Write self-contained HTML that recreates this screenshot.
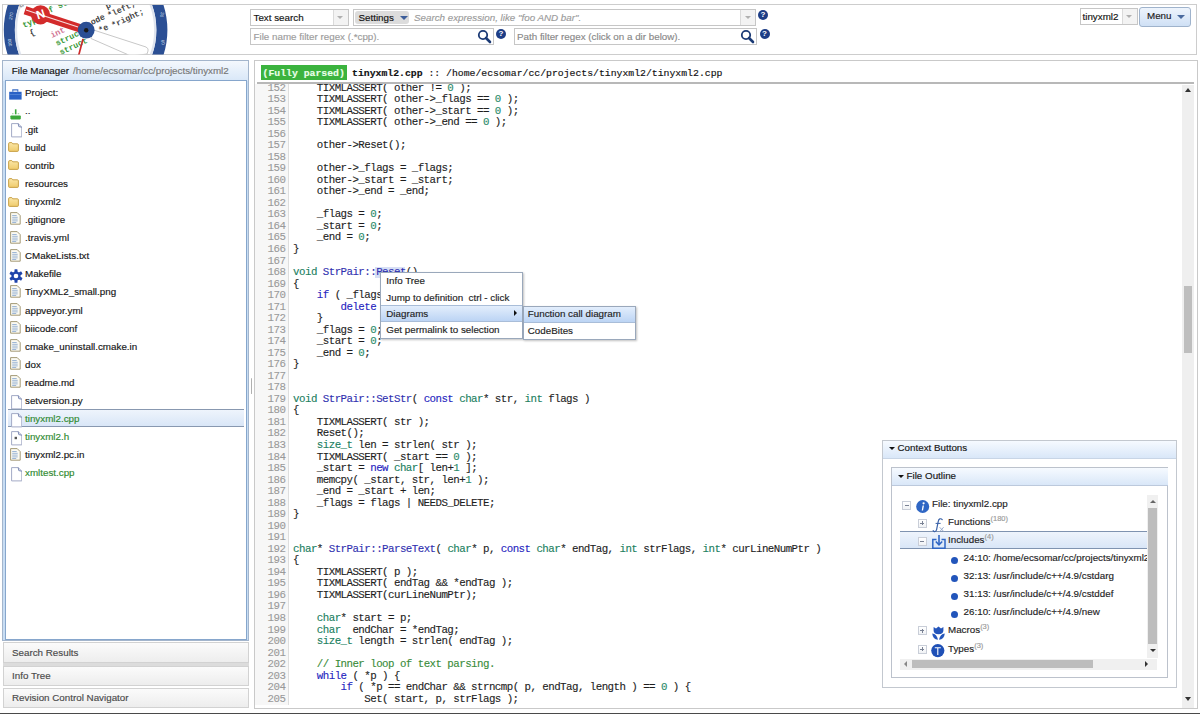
<!DOCTYPE html><html><head><meta charset="utf-8"><style>
*{box-sizing:border-box}
html,body{margin:0;padding:0}
body{width:1200px;height:714px;overflow:hidden;position:relative;background:#fff;font-family:"Liberation Sans",sans-serif;font-size:9.8px;color:#222}
div,span{position:absolute}
.t{white-space:nowrap;-webkit-text-stroke:0.15px}
#hdr{left:2px;top:4px;width:1195px;height:51px;border:1px solid #cdcdcd;background:#fff;overflow:hidden}
.inp{border:1px solid #c6c6c6;background:#fff}
.arr{top:0;bottom:0;right:0;width:15px;border-left:1px solid #dadada;background:#f3f3f3}
.arr:after{content:"";position:absolute;left:3.5px;top:6px;border-left:3.5px solid transparent;border-right:3.5px solid transparent;border-top:3.5px solid #b0b0b0}
.ph{color:#9b9b9b}
.help{width:10px;height:10px;border-radius:50%;background:#1d3d86;color:#fff;font-weight:bold;font-size:8px;line-height:10px;text-align:center}
.code{font-family:"Liberation Mono",monospace;font-size:10.8px;letter-spacing:-0.546px;white-space:pre;line-height:11.526px;-webkit-text-stroke:0.12px}
.hd{font-family:"Liberation Mono",monospace;font-size:9.8px;white-space:pre}
i{font-style:normal}
.kw{color:#2525c0}.ty{color:#208060}.nu{color:#2a8a6a}.df{color:#3030b0}.cm{color:#3a8c3a}
</style></head><body>
<div id="hdr"></div>
<svg style="position:absolute;left:0;top:0" width="175" height="56" viewBox="0 0 175 56">
<defs><clipPath id="lc"><rect x="3" y="5" width="168" height="49.5"/></clipPath></defs>
<g clip-path="url(#lc)">
<circle cx="85.6" cy="30" r="76.3" fill="none" stroke="#2b4f94" stroke-width="11"/>
<circle cx="85.6" cy="30" r="69.6" fill="none" stroke="#dfe4ee" stroke-width="2.2"/>
<g font-family="Liberation Mono" font-size="8.3" font-weight="bold">
<text transform="translate(109,18) rotate(-25)" fill="#444">*left;</text>
<text transform="translate(107,9) rotate(-25)" fill="#444">p</text>
<text transform="translate(92,25) rotate(-25)" fill="#444">ode</text>
<text transform="translate(113,28) rotate(-25)" fill="#444">*right;</text>
<text transform="translate(100,33) rotate(-25)" fill="#444">*e</text>
<text transform="translate(24,28) rotate(-25)" fill="#3a9a3a">typ</text>
<text transform="translate(50,13) rotate(-25)" fill="#3a9a3a">f st</text>
<text transform="translate(31,36) rotate(-25)" fill="#444">{</text>
<text transform="translate(52,38) rotate(-25)" fill="#d07090">int</text>
<text transform="translate(57,46) rotate(-25)" fill="#3a9a3a">struc</text>
<text transform="translate(61,55) rotate(-25)" fill="#3a9a3a">struct</text>
<text transform="translate(20,8) rotate(-25)" fill="#999">u</text>
</g>
<path d="M92 29.5 L146 47 Q149 48.5 148 51 L147 54 L131 56 L91 38.5 Z" fill="#fff" stroke="#c8c8c8" stroke-width="1"/>
<line x1="25" y1="10.3" x2="86" y2="30.2" stroke="#d32b2b" stroke-width="8.5"/>
<circle cx="40.5" cy="14.8" r="9.6" fill="#d32b2b"/>
<line x1="26" y1="10" x2="78" y2="27" stroke="#f8dede" stroke-width="1.1"/>
<text x="40.6" y="18.3" font-family="Liberation Sans" font-weight="bold" font-size="12" fill="#fff" text-anchor="middle" transform="rotate(-18 40.6 14)">N</text>
<line x1="83" y1="39" x2="78.5" y2="56" stroke="#cc2a2a" stroke-width="1.7"/>
<circle cx="86.2" cy="30.2" r="8.4" fill="#2b4f94"/>
<circle cx="86.2" cy="30.2" r="2.2" fill="#1a1a1a"/>
<g font-family="Liberation Sans" font-size="4.5" fill="#dfe6f2">
<text transform="translate(12,20) rotate(-80)">270</text>
<text transform="translate(12,46) rotate(-100)">300</text>
<text transform="translate(161,12) rotate(100)">30</text>
<text transform="translate(161,40) rotate(80)">60</text>
</g>
</g></svg>
<div class="inp" style="left:250px;top:9px;width:98.5px;height:16.5px"><span class="t" style="left:2.5px;top:1.5px;color:#111">Text search</span><div class="arr"></div></div>
<div class="inp" style="left:353px;top:9px;width:403px;height:16.5px"><div style="left:1px;top:1.2px;width:54px;height:12.8px;border-radius:3px;background:#dcdcdc"></div><span class="t" style="left:4.5px;top:1.5px;color:#111">Settings</span><span style="left:45.5px;top:6.2px;border-left:4px solid transparent;border-right:4px solid transparent;border-top:4.5px solid #3d5e9a"></span><span class="t ph" style="left:60px;top:1.5px;font-style:italic">Search expression, like "foo AND bar".</span><div class="arr"></div></div>
<div class="help" style="left:758px;top:10px">?</div>
<div class="inp" style="left:250px;top:28px;width:244px;height:16.5px"><span class="t ph" style="left:2.5px;top:1.5px">File name filter regex (.*cpp).</span></div>
<div class="help" style="left:496px;top:29px">?</div>
<div class="inp" style="left:513.5px;top:28px;width:243px;height:16.5px"><span class="t ph" style="left:2.5px;top:1.5px;color:#888">Path filter regex (click on a dir below).</span></div>
<div class="help" style="left:759.5px;top:29px">?</div>
<svg style="position:absolute;left:477px;top:29px" width="15" height="15" viewBox="0 0 15 15"><circle cx="6" cy="6" r="4.2" fill="none" stroke="#1b3a75" stroke-width="1.8"/><line x1="9" y1="9" x2="13" y2="13" stroke="#1b3a75" stroke-width="2.6" stroke-linecap="round"/></svg>
<svg style="position:absolute;left:740px;top:29px" width="15" height="15" viewBox="0 0 15 15"><circle cx="6" cy="6" r="4.2" fill="none" stroke="#1b3a75" stroke-width="1.8"/><line x1="9" y1="9" x2="13" y2="13" stroke="#1b3a75" stroke-width="2.6" stroke-linecap="round"/></svg>
<div class="inp" style="left:1080px;top:8px;width:57.5px;height:17px"><span class="t" style="left:1.5px;top:2px;color:#111">tinyxml2</span><div class="arr"></div></div>
<div style="left:1139px;top:7px;width:51.5px;height:19.5px;border:1px solid #9fb3cc;border-radius:3px;background:linear-gradient(#eef4fc,#cfe0f5)"><span class="t" style="left:7px;top:2.2px;color:#1a1a1a">Menu</span><span style="left:37px;top:7px;border-left:4px solid transparent;border-right:4px solid transparent;border-top:4.5px solid #4a6a9e"></span></div>
<div style="left:2px;top:59.5px;width:247px;height:581px;border:1px solid #a3b5cc;background:linear-gradient(#f4f8fd,#d8e7f8 20px,#c8ddf3 20px,#c8ddf3)"></div>
<span class="t" style="left:11.8px;top:64.6px;color:#111">File Manager</span><span class="t" style="left:73px;top:64.6px;color:#777">/home/ecsomar/cc/projects/tinyxml2</span>
<div style="left:5px;top:80px;width:242px;height:560px;border:1px solid #86a6cc;background:#fff"></div>
<span class="t" style="left:25px;top:87.30px;color:#151515">Project:</span>
<svg style="position:absolute;left:9px;top:89.1px" width="13" height="11" viewBox="0 0 13 11"><rect x="0.2" y="2.8" width="12.4" height="7.8" fill="#2a62c6"/><path d="M3.8 2.8 L3.8 0.9 L8.8 0.9 L8.8 2.8" fill="none" stroke="#3d6ec4" stroke-width="1.1"/><rect x="0.2" y="5" width="12.4" height="0.7" fill="#5e8fdc"/></svg>
<span class="t" style="left:25px;top:105.40px;color:#151515">..</span>
<svg style="position:absolute;left:9.5px;top:108.8px" width="11" height="11" viewBox="0 0 11 11"><rect x="0.4" y="6.4" width="10.4" height="4" rx="0.8" fill="#3aa83a"/><rect x="4.9" y="0.3" width="1.6" height="5" fill="#3aa83a"/><rect x="2" y="4.3" width="1.5" height="0.9" fill="#8acb8a"/><rect x="7.7" y="4.3" width="1.5" height="0.9" fill="#8acb8a"/></svg>
<span class="t" style="left:25px;top:123.50px;color:#151515">.git</span>
<svg style="position:absolute;left:10.5px;top:123.4px" width="11.5" height="14.5" viewBox="0 0 11.5 14.5"><path d="M0.6 0.6 L7.2 0.6 L10.8 4.2 L10.8 13.9 L0.6 13.9 Z" fill="#fff" stroke="#a3aac6" stroke-width="1"/><path d="M7.2 0.6 L7.8 3.6 L10.8 4.2" fill="none" stroke="#6f7fae" stroke-width="0.9"/></svg>
<span class="t" style="left:25px;top:141.60px;color:#151515">build</span>
<svg style="position:absolute;left:8px;top:142.2px" width="11" height="10" viewBox="0 0 11 10"><defs><linearGradient id="fg3" x1="0" y1="0" x2="0" y2="1"><stop offset="0" stop-color="#fbe7a8"/><stop offset="1" stop-color="#efcb6c"/></linearGradient></defs><path d="M0.6 1.8 Q0.6 0.6 1.8 0.6 L3.8 0.6 L4.8 1.8 L9.4 1.8 Q10.4 1.8 10.4 2.8 L10.4 8.6 Q10.4 9.4 9.4 9.4 L1.6 9.4 Q0.6 9.4 0.6 8.6 Z" fill="url(#fg3)" stroke="#c39a3c" stroke-width="0.9"/></svg>
<span class="t" style="left:25px;top:159.70px;color:#151515">contrib</span>
<svg style="position:absolute;left:8px;top:160.3px" width="11" height="10" viewBox="0 0 11 10"><defs><linearGradient id="fg4" x1="0" y1="0" x2="0" y2="1"><stop offset="0" stop-color="#fbe7a8"/><stop offset="1" stop-color="#efcb6c"/></linearGradient></defs><path d="M0.6 1.8 Q0.6 0.6 1.8 0.6 L3.8 0.6 L4.8 1.8 L9.4 1.8 Q10.4 1.8 10.4 2.8 L10.4 8.6 Q10.4 9.4 9.4 9.4 L1.6 9.4 Q0.6 9.4 0.6 8.6 Z" fill="url(#fg4)" stroke="#c39a3c" stroke-width="0.9"/></svg>
<span class="t" style="left:25px;top:177.80px;color:#151515">resources</span>
<svg style="position:absolute;left:8px;top:178.4px" width="11" height="10" viewBox="0 0 11 10"><defs><linearGradient id="fg5" x1="0" y1="0" x2="0" y2="1"><stop offset="0" stop-color="#fbe7a8"/><stop offset="1" stop-color="#efcb6c"/></linearGradient></defs><path d="M0.6 1.8 Q0.6 0.6 1.8 0.6 L3.8 0.6 L4.8 1.8 L9.4 1.8 Q10.4 1.8 10.4 2.8 L10.4 8.6 Q10.4 9.4 9.4 9.4 L1.6 9.4 Q0.6 9.4 0.6 8.6 Z" fill="url(#fg5)" stroke="#c39a3c" stroke-width="0.9"/></svg>
<span class="t" style="left:25px;top:195.90px;color:#151515">tinyxml2</span>
<svg style="position:absolute;left:8px;top:196.5px" width="11" height="10" viewBox="0 0 11 10"><defs><linearGradient id="fg6" x1="0" y1="0" x2="0" y2="1"><stop offset="0" stop-color="#fbe7a8"/><stop offset="1" stop-color="#efcb6c"/></linearGradient></defs><path d="M0.6 1.8 Q0.6 0.6 1.8 0.6 L3.8 0.6 L4.8 1.8 L9.4 1.8 Q10.4 1.8 10.4 2.8 L10.4 8.6 Q10.4 9.4 9.4 9.4 L1.6 9.4 Q0.6 9.4 0.6 8.6 Z" fill="url(#fg6)" stroke="#c39a3c" stroke-width="0.9"/></svg>
<span class="t" style="left:25px;top:214.00px;color:#151515">.gitignore</span>
<svg style="position:absolute;left:9.7px;top:212.4px" width="11" height="13" viewBox="0 0 11 13"><path d="M0.6 0.6 L7.2 0.6 L10.2 3.6 L10.2 12.2 L0.6 12.2 Z" fill="#fbfaf2" stroke="#9b8f68" stroke-width="0.9"/><path d="M2.2 3.5h4.5M2.2 5.3h5.5M2.2 7.1h5.5M2.2 8.9h5.5M2.2 10.5h4" stroke="#93afd3" stroke-width="0.9"/></svg>
<span class="t" style="left:25px;top:232.10px;color:#151515">.travis.yml</span>
<svg style="position:absolute;left:9.7px;top:230.5px" width="11" height="13" viewBox="0 0 11 13"><path d="M0.6 0.6 L7.2 0.6 L10.2 3.6 L10.2 12.2 L0.6 12.2 Z" fill="#fbfaf2" stroke="#9b8f68" stroke-width="0.9"/><path d="M2.2 3.5h4.5M2.2 5.3h5.5M2.2 7.1h5.5M2.2 8.9h5.5M2.2 10.5h4" stroke="#93afd3" stroke-width="0.9"/></svg>
<span class="t" style="left:25px;top:250.20px;color:#151515">CMakeLists.txt</span>
<svg style="position:absolute;left:9.7px;top:248.6px" width="11" height="13" viewBox="0 0 11 13"><path d="M0.6 0.6 L7.2 0.6 L10.2 3.6 L10.2 12.2 L0.6 12.2 Z" fill="#fbfaf2" stroke="#9b8f68" stroke-width="0.9"/><path d="M2.2 3.5h4.5M2.2 5.3h5.5M2.2 7.1h5.5M2.2 8.9h5.5M2.2 10.5h4" stroke="#93afd3" stroke-width="0.9"/></svg>
<span class="t" style="left:25px;top:268.30px;color:#151515">Makefile</span>
<svg style="position:absolute;left:8.5px;top:268.9px" width="14" height="14" viewBox="0 0 14 14"><g fill="#1f44aa"><circle cx="7" cy="7" r="4.6"/><rect x="5.5" y="0.2" width="3" height="13.6" rx="0.6"/><rect x="5.5" y="0.2" width="3" height="13.6" rx="0.6" transform="rotate(60 7 7)"/><rect x="5.5" y="0.2" width="3" height="13.6" rx="0.6" transform="rotate(-60 7 7)"/></g><circle cx="7" cy="7" r="2.3" fill="#fff"/></svg>
<span class="t" style="left:25px;top:286.40px;color:#151515">TinyXML2_small.png</span>
<svg style="position:absolute;left:9.7px;top:284.8px" width="11" height="13" viewBox="0 0 11 13"><path d="M0.6 0.6 L7.2 0.6 L10.2 3.6 L10.2 12.2 L0.6 12.2 Z" fill="#fbfaf2" stroke="#9b8f68" stroke-width="0.9"/><path d="M2.2 3.5h4.5M2.2 5.3h5.5M2.2 7.1h5.5M2.2 8.9h5.5M2.2 10.5h4" stroke="#93afd3" stroke-width="0.9"/></svg>
<span class="t" style="left:25px;top:304.50px;color:#151515">appveyor.yml</span>
<svg style="position:absolute;left:9.7px;top:302.9px" width="11" height="13" viewBox="0 0 11 13"><path d="M0.6 0.6 L7.2 0.6 L10.2 3.6 L10.2 12.2 L0.6 12.2 Z" fill="#fbfaf2" stroke="#9b8f68" stroke-width="0.9"/><path d="M2.2 3.5h4.5M2.2 5.3h5.5M2.2 7.1h5.5M2.2 8.9h5.5M2.2 10.5h4" stroke="#93afd3" stroke-width="0.9"/></svg>
<span class="t" style="left:25px;top:322.60px;color:#151515">biicode.conf</span>
<svg style="position:absolute;left:9.7px;top:321.0px" width="11" height="13" viewBox="0 0 11 13"><path d="M0.6 0.6 L7.2 0.6 L10.2 3.6 L10.2 12.2 L0.6 12.2 Z" fill="#fbfaf2" stroke="#9b8f68" stroke-width="0.9"/><path d="M2.2 3.5h4.5M2.2 5.3h5.5M2.2 7.1h5.5M2.2 8.9h5.5M2.2 10.5h4" stroke="#93afd3" stroke-width="0.9"/></svg>
<span class="t" style="left:25px;top:340.70px;color:#151515">cmake_uninstall.cmake.in</span>
<svg style="position:absolute;left:9.7px;top:339.1px" width="11" height="13" viewBox="0 0 11 13"><path d="M0.6 0.6 L7.2 0.6 L10.2 3.6 L10.2 12.2 L0.6 12.2 Z" fill="#fbfaf2" stroke="#9b8f68" stroke-width="0.9"/><path d="M2.2 3.5h4.5M2.2 5.3h5.5M2.2 7.1h5.5M2.2 8.9h5.5M2.2 10.5h4" stroke="#93afd3" stroke-width="0.9"/></svg>
<span class="t" style="left:25px;top:358.80px;color:#151515">dox</span>
<svg style="position:absolute;left:9.7px;top:357.2px" width="11" height="13" viewBox="0 0 11 13"><path d="M0.6 0.6 L7.2 0.6 L10.2 3.6 L10.2 12.2 L0.6 12.2 Z" fill="#fbfaf2" stroke="#9b8f68" stroke-width="0.9"/><path d="M2.2 3.5h4.5M2.2 5.3h5.5M2.2 7.1h5.5M2.2 8.9h5.5M2.2 10.5h4" stroke="#93afd3" stroke-width="0.9"/></svg>
<span class="t" style="left:25px;top:376.90px;color:#151515">readme.md</span>
<svg style="position:absolute;left:9.7px;top:375.3px" width="11" height="13" viewBox="0 0 11 13"><path d="M0.6 0.6 L7.2 0.6 L10.2 3.6 L10.2 12.2 L0.6 12.2 Z" fill="#fbfaf2" stroke="#9b8f68" stroke-width="0.9"/><path d="M2.2 3.5h4.5M2.2 5.3h5.5M2.2 7.1h5.5M2.2 8.9h5.5M2.2 10.5h4" stroke="#93afd3" stroke-width="0.9"/></svg>
<span class="t" style="left:25px;top:395.00px;color:#151515">setversion.py</span>
<svg style="position:absolute;left:10.5px;top:394.9px" width="11.5" height="14.5" viewBox="0 0 11.5 14.5"><path d="M0.6 0.6 L7.2 0.6 L10.8 4.2 L10.8 13.9 L0.6 13.9 Z" fill="#fff" stroke="#a3aac6" stroke-width="1"/><path d="M7.2 0.6 L7.8 3.6 L10.8 4.2" fill="none" stroke="#6f7fae" stroke-width="0.9"/></svg>
<div style="left:8px;top:409.3px;width:236px;height:18px;border-top:1px solid #8898b0;border-bottom:1px solid #8898b0;background:linear-gradient(#eef4fc,#d9e6f7)"></div>
<span class="t" style="left:25px;top:413.10px;color:#2f8a2f">tinyxml2.cpp</span>
<svg style="position:absolute;left:10.5px;top:413.0px" width="11.5" height="14.5" viewBox="0 0 11.5 14.5"><path d="M0.6 0.6 L7.2 0.6 L10.8 4.2 L10.8 13.9 L0.6 13.9 Z" fill="#fff" stroke="#a3aac6" stroke-width="1"/><path d="M7.2 0.6 L7.8 3.6 L10.8 4.2" fill="none" stroke="#6f7fae" stroke-width="0.9"/></svg>
<span class="t" style="left:25px;top:431.20px;color:#2f8a2f">tinyxml2.h</span>
<svg style="position:absolute;left:10.5px;top:431.1px" width="11.5" height="14.5" viewBox="0 0 11.5 14.5"><path d="M0.6 0.6 L7.2 0.6 L10.8 4.2 L10.8 13.9 L0.6 13.9 Z" fill="#fff" stroke="#a3aac6" stroke-width="1"/><path d="M7.2 0.6 L7.8 3.6 L10.8 4.2" fill="none" stroke="#6f7fae" stroke-width="0.9"/><rect x="3.6" y="5.8" width="2.4" height="2.4" fill="#555"/></svg>
<span class="t" style="left:25px;top:449.30px;color:#151515">tinyxml2.pc.in</span>
<svg style="position:absolute;left:9.7px;top:447.7px" width="11" height="13" viewBox="0 0 11 13"><path d="M0.6 0.6 L7.2 0.6 L10.2 3.6 L10.2 12.2 L0.6 12.2 Z" fill="#fbfaf2" stroke="#9b8f68" stroke-width="0.9"/><path d="M2.2 3.5h4.5M2.2 5.3h5.5M2.2 7.1h5.5M2.2 8.9h5.5M2.2 10.5h4" stroke="#93afd3" stroke-width="0.9"/></svg>
<span class="t" style="left:25px;top:467.40px;color:#2f8a2f">xmltest.cpp</span>
<svg style="position:absolute;left:10.5px;top:467.3px" width="11.5" height="14.5" viewBox="0 0 11.5 14.5"><path d="M0.6 0.6 L7.2 0.6 L10.8 4.2 L10.8 13.9 L0.6 13.9 Z" fill="#fff" stroke="#a3aac6" stroke-width="1"/><path d="M7.2 0.6 L7.8 3.6 L10.8 4.2" fill="none" stroke="#6f7fae" stroke-width="0.9"/></svg>
<div style="left:3px;top:641.5px;width:245.5px;height:21px;border:1px solid #d2d2d2;background:linear-gradient(#fbfbfb,#ededed)"><span class="t" style="left:8px;top:4.6px;color:#4a4a4a">Search Results</span></div>
<div style="left:3px;top:665.5px;width:245.5px;height:20px;border:1px solid #d2d2d2;background:linear-gradient(#fbfbfb,#ededed)"><span class="t" style="left:8px;top:3.3px;color:#4a4a4a">Info Tree</span></div>
<div style="left:3px;top:687.5px;width:245.5px;height:20px;border:1px solid #d2d2d2;background:linear-gradient(#fbfbfb,#ededed)"><span class="t" style="left:8px;top:3.3px;color:#4a4a4a">Revision Control Navigator</span></div>
<div style="left:3px;top:662.5px;width:245.5px;height:3px;background:#dcdcdc"></div>
<div style="left:250.8px;top:377.5px;width:1.2px;height:16px;background:#b0b0b0;border-radius:1px"></div>
<div style="left:253.5px;top:59.5px;width:944px;height:649.5px;border:1px solid #c9c9c9;background:#fff"></div>
<div style="left:261px;top:65px;width:85.7px;height:14.7px;background:#3bb33e"></div>
<span class="t hd" style="left:262.5px;top:67.8px;color:#eaffea;font-weight:bold">(Fully parsed)</span>
<span class="t hd" style="left:352px;top:68.1px;color:#111"><b>tinyxml2.cpp</b> :: /home/ecsomar/cc/projects/tinyxml2/tinyxml2.cpp</span>
<div style="left:257px;top:81.8px;width:937px;height:2px;background:#b8b8b8"></div>
<div style="left:254.5px;top:83.8px;width:927px;height:624px;overflow:hidden">
<div style="left:0;top:0;width:34px;height:621px;background:#f7f7f7;border-right:1px solid #dedede"></div>
<div class="code" style="left:0;top:-1.26px;width:30.9px;text-align:right;color:#999;-webkit-text-stroke:0.1px">152
153
154
155
156
157
158
159
160
161
162
163
164
165
166
167
168
169
170
171
172
173
174
175
176
177
178
179
180
181
182
183
184
185
186
187
188
189
190
191
192
193
194
195
196
197
198
199
200
201
202
203
204
205</div>
<div style="left:120.8px;top:183.46px;width:29.4px;height:10.5px;background:#d7dff5"></div>
<div class="code" style="left:38.60px;top:-1.26px;color:#1e1e1e">    TIXMLASSERT( other != <i class="nu">0</i> );
    TIXMLASSERT( other-&gt;_flags == <i class="nu">0</i> );
    TIXMLASSERT( other-&gt;_start == <i class="nu">0</i> );
    TIXMLASSERT( other-&gt;_end == <i class="nu">0</i> );

    other-&gt;Reset();

    other-&gt;_flags = _flags;
    other-&gt;_start = _start;
    other-&gt;_end = _end;

    _flags = <i class="nu">0</i>;
    _start = <i class="nu">0</i>;
    _end = <i class="nu">0</i>;
}

<i class="ty">void</i> <i class="df">StrPair::Reset</i>()
{
    <i class="kw">if</i> ( _flags &amp; NEEDS_DELETE ) {
        <i class="kw">delete</i> [] _start;
    }
    _flags = <i class="nu">0</i>;
    _start = <i class="nu">0</i>;
    _end = <i class="nu">0</i>;
}


<i class="ty">void</i> <i class="df">StrPair::SetStr</i>( <i class="kw">const</i> <i class="ty">char</i>* str, <i class="ty">int</i> flags )
{
    TIXMLASSERT( str );
    Reset();
    <i class="ty">size_t</i> len = strlen( str );
    TIXMLASSERT( _start == <i class="nu">0</i> );
    _start = <i class="kw">new</i> <i class="ty">char</i>[ len+<i class="nu">1</i> ];
    memcpy( _start, str, len+<i class="nu">1</i> );
    _end = _start + len;
    _flags = flags | NEEDS_DELETE;
}


<i class="ty">char</i>* <i class="df">StrPair::ParseText</i>( <i class="ty">char</i>* p, <i class="kw">const</i> <i class="ty">char</i>* endTag, <i class="ty">int</i> strFlags, <i class="ty">int</i>* curLineNumPtr )
{
    TIXMLASSERT( p );
    TIXMLASSERT( endTag &amp;&amp; *endTag );
    TIXMLASSERT(curLineNumPtr);

    <i class="ty">char</i>* start = p;
    <i class="ty">char</i>  endChar = *endTag;
    <i class="ty">size_t</i> length = strlen( endTag );

    <i class="cm" style="font-style:normal">// Inner loop of text parsing.</i>
    <i class="kw">while</i> ( *p ) {
        <i class="kw">if</i> ( *p == endChar &amp;&amp; strncmp( p, endTag, length ) == <i class="nu">0</i> ) {
            Set( start, p, strFlags );</div>
</div>
<div style="left:1182px;top:84.5px;width:12px;height:623px;background:#efefef"></div>
<div style="left:1183.6px;top:285.7px;width:8.4px;height:67px;background:#bebebe"></div>
<span style="left:1184.5px;top:88px;border-left:3.5px solid transparent;border-right:3.5px solid transparent;border-bottom:4px solid #333"></span>
<span style="left:1184.5px;top:696.5px;border-left:3.5px solid transparent;border-right:3.5px solid transparent;border-top:4px solid #333"></span>
<div style="left:881.5px;top:439.5px;width:295.5px;height:248px;border:1px solid #c3c8cf;background:#fff"></div>
<div style="left:882.5px;top:440.5px;width:293.5px;height:18px;border-bottom:1px solid #c8d5e6;background:linear-gradient(#f6faff,#d9e7f8)"></div>
<span style="left:888.5px;top:447px;border-left:3px solid transparent;border-right:3px solid transparent;border-top:3.5px solid #111"></span>
<span class="t" style="left:897.5px;top:441.6px;color:#151515">Context Buttons</span>
<div style="left:890.5px;top:467.3px;width:277.6px;height:211px;border:1px solid #bcc2cc;background:#fff"></div>
<div style="left:891.5px;top:468.3px;width:276px;height:18px;border-bottom:1px solid #bcc9dc;background:linear-gradient(#f6faff,#d9e7f8)"></div>
<span style="left:897.5px;top:475px;border-left:3px solid transparent;border-right:3px solid transparent;border-top:3.5px solid #111"></span>
<span class="t" style="left:906.5px;top:469.7px;color:#151515">File Outline</span>
<div style="left:900px;top:495px;width:258px;height:175px;overflow:hidden">
<div style="left:0;top:36.3px;width:246.5px;height:17.5px;border-top:1px solid #7f93b0;border-bottom:1px solid #7f93b0;background:linear-gradient(#eef4fc,#d9e6f7)"></div>
<div style="left:2.0px;top:5.5px;width:9px;height:9px;border:1px solid #c9ced8;background:linear-gradient(#fff,#f0f2f5)"><span style="left:1.5px;top:3px;width:4px;height:1px;background:#7a8294"></span></div>
<svg style="position:absolute;left:16px;top:5px" width="14" height="14" viewBox="0 0 14 14"><circle cx="6.7" cy="6.5" r="6.5" fill="#2f66c4"/><circle cx="7.6" cy="3.3" r="1.1" fill="#fff"/><path d="M6.6 5.6 L8 5.6 L7 10.6 L5.7 10.6 Z" fill="#fff"/></svg>
<span class="t" style="left:32px;top:3.4px;color:#1e1e1e">File: tinyxml2.cpp</span>
<div style="left:17.7px;top:23.5px;width:9px;height:9px;border:1px solid #c9ced8;background:linear-gradient(#fff,#f0f2f5)"><span style="left:1.5px;top:3px;width:4px;height:1px;background:#7a8294"></span><span style="left:3px;top:1.5px;width:1px;height:4px;background:#7a8294"></span></div>
<svg style="position:absolute;left:32px;top:23px" width="14" height="15" viewBox="0 0 14 15"><path d="M10.2 1.6 Q9.2 0.4 7.8 0.9 Q6.6 1.4 6.2 3.6 L4.6 11.6 Q4.1 13.8 2.4 13.6 Q1.4 13.4 1.2 12.6" fill="none" stroke="#3a62a8" stroke-width="1.2" stroke-linecap="round"/><path d="M3.6 5.4 L8.6 5.4" stroke="#3a62a8" stroke-width="1"/><path d="M7.6 9.2 L11.8 13.6 M11.6 9.2 L7.8 13.6" stroke="#8ea4c8" stroke-width="0.9"/></svg>
<span class="t" style="left:48px;top:20.9px;color:#1e1e1e">Functions<sup style="font-size:7.5px;color:#999;vertical-align:0;position:relative;top:-4px">(180)</sup></span>
<div style="left:17.7px;top:42.0px;width:9px;height:9px;border:1px solid #c9ced8;background:linear-gradient(#fff,#f0f2f5)"><span style="left:1.5px;top:3px;width:4px;height:1px;background:#7a8294"></span></div>
<svg style="position:absolute;left:31.5px;top:40px" width="14" height="14" viewBox="0 0 14 14"><path d="M4.5 4.5 L0.8 4.5 L0.8 13.2 L13 13.2 L13 4.5 L9.5 4.5" fill="none" stroke="#2f66c4" stroke-width="1.5"/><path d="M7 0 L7 9.5" stroke="#2f66c4" stroke-width="1.6"/><path d="M3.8 6.5 L7 9.8 L10.2 6.5" fill="none" stroke="#2f66c4" stroke-width="1.6"/></svg>
<span class="t" style="left:48px;top:39.1px;color:#1e1e1e">Includes<sup style="font-size:7.5px;color:#999;vertical-align:0;position:relative;top:-4px">(4)</sup></span>
<span style="left:50.6px;top:62.2px;width:7px;height:7px;border-radius:50%;background:#2255bb"></span>
<span class="t" style="left:63.60000000000002px;top:57.3px;color:#1e1e1e">24:10: /home/ecsomar/cc/projects/tinyxml2/tinyxml2.h</span>
<span style="left:50.6px;top:80.2px;width:7px;height:7px;border-radius:50%;background:#2255bb"></span>
<span class="t" style="left:63.60000000000002px;top:75.3px;color:#1e1e1e">32:13: /usr/include/c++/4.9/cstdarg</span>
<span style="left:50.6px;top:98.2px;width:7px;height:7px;border-radius:50%;background:#2255bb"></span>
<span class="t" style="left:63.60000000000002px;top:93.3px;color:#1e1e1e">31:13: /usr/include/c++/4.9/cstddef</span>
<span style="left:50.6px;top:116.2px;width:7px;height:7px;border-radius:50%;background:#2255bb"></span>
<span class="t" style="left:63.60000000000002px;top:111.3px;color:#1e1e1e">26:10: /usr/include/c++/4.9/new</span>
<div style="left:17.5px;top:131.3px;width:9px;height:9px;border:1px solid #c9ced8;background:linear-gradient(#fff,#f0f2f5)"><span style="left:1.5px;top:3px;width:4px;height:1px;background:#7a8294"></span><span style="left:3px;top:1.5px;width:1px;height:4px;background:#7a8294"></span></div>
<svg style="position:absolute;left:32px;top:130.5px" width="13" height="14" viewBox="0 0 13 14"><path d="M1.6 1 L4 2.6 L6.5 0.4 L9 2.6 L11.4 1 L11.4 4.6 Q11.4 8.2 6.5 8.2 Q1.6 8.2 1.6 4.6 Z" fill="#2455bb"/><path d="M0.2 7.6 Q4.8 8 6 13.8 Q0.8 13.4 0.2 7.6 Z" fill="#2455bb"/><path d="M12.8 7.6 Q8.2 8 7 13.8 Q12.2 13.4 12.8 7.6 Z" fill="#2455bb"/></svg>
<span class="t" style="left:48px;top:129.3px;color:#1e1e1e">Macros<sup style="font-size:7.5px;color:#999;vertical-align:0;position:relative;top:-4px">(3)</sup></span>
<div style="left:17.5px;top:149.5px;width:9px;height:9px;border:1px solid #c9ced8;background:linear-gradient(#fff,#f0f2f5)"><span style="left:1.5px;top:3px;width:4px;height:1px;background:#7a8294"></span><span style="left:3px;top:1.5px;width:1px;height:4px;background:#7a8294"></span></div>
<svg style="position:absolute;left:31.299999999999955px;top:149px" width="14" height="14" viewBox="0 0 14 14"><circle cx="6.8" cy="6.6" r="6.6" fill="#1f50b6"/><path d="M3.8 3.8 H9.8 M6.8 3.8 V11" stroke="#fff" stroke-width="1.1"/></svg>
<span class="t" style="left:48px;top:147.5px;color:#1e1e1e">Types<sup style="font-size:7.5px;color:#999;vertical-align:0;position:relative;top:-4px">(3)</sup></span>
</div>
<div style="left:1147px;top:495px;width:10.7px;height:163px;background:#f0f0f0"></div>
<div style="left:1148.3px;top:507.6px;width:8.7px;height:136px;background:#bdbdbd"></div>
<span style="left:1150px;top:499.5px;border-left:3px solid transparent;border-right:3px solid transparent;border-bottom:3.5px solid #666"></span>
<span style="left:1150px;top:648.5px;border-left:3px solid transparent;border-right:3px solid transparent;border-top:3.5px solid #333"></span>
<div style="left:900px;top:658.6px;width:257px;height:11.2px;background:#f0f0f0"></div>
<div style="left:911.7px;top:660px;width:181px;height:8.4px;background:#bdbdbd"></div>
<span style="left:903.5px;top:661px;border-top:3px solid transparent;border-bottom:3px solid transparent;border-right:3.5px solid #888"></span>
<span style="left:1144.5px;top:661px;border-top:3px solid transparent;border-bottom:3px solid transparent;border-left:3.5px solid #333"></span>
<div style="left:380.4px;top:272px;width:142.3px;height:66.7px;border:1px solid #9aa8bb;background:#fff;box-shadow:1px 1px 2px rgba(0,0,0,.25)"></div>
<div style="left:381.4px;top:305.3px;width:140.3px;height:16.7px;border-top:1px solid #a9bdd8;border-bottom:1px solid #a9bdd8;background:linear-gradient(#e3eefc,#bcd4f4)"></div>
<span class="t" style="left:386.3px;top:274.9px;color:#1e1e1e">Info Tree</span>
<span class="t" style="left:386.3px;top:291.6px;color:#1e1e1e">Jump to definition&nbsp; ctrl - click</span>
<span class="t" style="left:386.3px;top:307.6px;color:#1e1e1e">Diagrams</span>
<span class="t" style="left:386.3px;top:324.2px;color:#1e1e1e">Get permalink to selection</span>
<span style="left:513.5px;top:310px;border-top:3.3px solid transparent;border-bottom:3.3px solid transparent;border-left:3.8px solid #111"></span>
<div style="left:522.6px;top:306px;width:113.2px;height:33.5px;border:1px solid #9aa8bb;background:#fff;box-shadow:1px 1px 2px rgba(0,0,0,.25)"></div>
<div style="left:523.6px;top:307px;width:111.2px;height:16px;border-bottom:1px solid #a9bdd8;background:linear-gradient(#e3eefc,#bcd4f4)"></div>
<span class="t" style="left:527.8px;top:308.2px;color:#1e1e1e">Function call diagram</span>
<span class="t" style="left:527.8px;top:325px;color:#1e1e1e">CodeBites</span>
<div style="left:0;top:712.6px;width:1200px;height:1.6px;background:#4a4a4a"></div>
</body></html>
